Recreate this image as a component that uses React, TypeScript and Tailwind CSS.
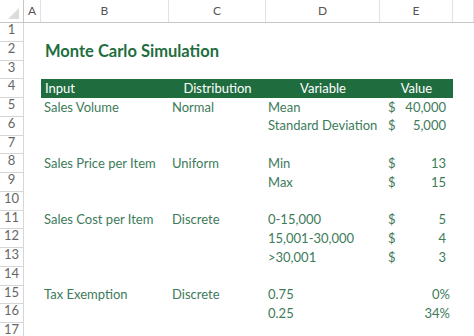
const COLS = "grid-cols-[24px_17px_128px_97px_114px_73px_1fr]";

type DataRow = {
  n: number;
  input?: string;
  dist?: string;
  variable?: string;
  value?: string;
  kind?: "money" | "pct";
};

const rows: DataRow[] = [
  { n: 5, input: "Sales Volume", dist: "Normal", variable: "Mean", value: "40,000", kind: "money" },
  { n: 6, variable: "Standard Deviation", value: "5,000", kind: "money" },
  { n: 7 },
  { n: 8, input: "Sales Price per Item", dist: "Uniform", variable: "Min", value: "13", kind: "money" },
  { n: 9, variable: "Max", value: "15", kind: "money" },
  { n: 10 },
  { n: 11, input: "Sales Cost per Item", dist: "Discrete", variable: "0-15,000", value: "5", kind: "money" },
  { n: 12, variable: "15,001-30,000", value: "4", kind: "money" },
  { n: 13, variable: ">30,001", value: "3", kind: "money" },
  { n: 14 },
  { n: 15, input: "Tax Exemption", dist: "Discrete", variable: "0.75", value: "0%", kind: "pct" },
  { n: 16, variable: "0.25", value: "34%", kind: "pct" },
  { n: 17 },
];

function RowNum({ n }: { n: number }) {
  return (
    <div className="flex h-[18.75px] items-start justify-center border-b border-r border-[#d6d6d6] text-[13px] leading-[13px] text-[#666]">
      {n}
    </div>
  );
}

function Cell({ children, className = "" }: { children?: React.ReactNode; className?: string }) {
  return (
    <div className={`flex h-[18.75px] items-center whitespace-nowrap ${className}`}>{children}</div>
  );
}

export default function App() {
  return (
    <div
      className="h-[336px] w-[474px] overflow-hidden bg-white text-[13px] text-[#3d7b5a]"
      style={{ fontFamily: "Lato, 'Open Sans', sans-serif" }}
    >
      {/* column headers */}
      <div className={`grid ${COLS} h-[23px] border-b border-[#c6c6c6] text-[12px] text-[#555]`}>
        <div className="relative border-r border-[#c6c6c6]">
          <div className="absolute bottom-[3px] right-[4px] h-0 w-0 border-b-[11px] border-l-[11px] border-b-[#dcdcdc] border-l-transparent" />
        </div>
        {["A", "B", "C", "D", "E", ""].map((c, i) => (
          <div key={i} className="flex items-end justify-center border-r border-[#e2e2e2] pb-[2px]">
            {c}
          </div>
        ))}
      </div>

      <div className={`grid ${COLS}`}>
        {/* row 1 */}
        <RowNum n={1} />
        <Cell className="col-span-6" />

        {/* row 2 title */}
        <RowNum n={2} />
        <Cell />
        <Cell className="col-span-5 pl-[4px] text-[16.5px] font-bold text-[#1e6e40]">Monte Carlo Simulation</Cell>

        {/* row 3 */}
        <RowNum n={3} />
        <Cell className="col-span-6" />

        {/* row 4 header bar */}
        <RowNum n={4} />
        <Cell />
        <Cell className="bg-[#1f6d3f] pl-[4px] text-white">Input</Cell>
        <Cell className="justify-center bg-[#1f6d3f] text-white">Distribution</Cell>
        <Cell className="justify-center bg-[#1f6d3f] text-white">Variable</Cell>
        <Cell className="justify-center bg-[#1f6d3f] text-white">Value</Cell>
        <Cell />

        {rows.map((r) => (
          <div key={r.n} className="contents">
            <RowNum n={r.n} />
            <Cell />
            <Cell className="pl-[3px]">{r.input}</Cell>
            <Cell className="pl-[3px]">{r.dist}</Cell>
            <Cell className="pl-[2px]">{r.variable}</Cell>
            {r.kind === "money" ? (
              <Cell className="justify-between pl-[8px] pr-[7px]">
                <span>$</span>
                <span>{r.value}</span>
              </Cell>
            ) : (
              <Cell className="justify-end pr-[3px]">{r.value}</Cell>
            )}
            <Cell />
          </div>
        ))}
      </div>
    </div>
  );
}
